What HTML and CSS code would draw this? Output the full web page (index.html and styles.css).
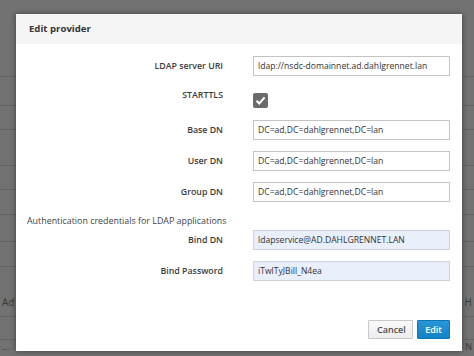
FILE: index.html
```html
<!DOCTYPE html>
<html lang="en">
  <head>
    <meta charset="UTF-8" />
    <meta name="viewport" content="width=device-width, initial-scale=1.0" />
    <title>Edit provider</title>
    <link rel="stylesheet" href="styles.css">
  </head>

  <body>
    <div class="page">
      <div class="row r1"></div>
      <div class="row r2"></div>
      <div class="row r3"></div>
      <div class="row r4"></div>
      <div class="row r5"></div>
      <div class="row r6"></div>
      <div class="row r7"></div>
      <div class="row r8"></div>
      <div class="row r9"><span>Ad</span><span>&#9675; H</span></div>
      <div class="row r10"></div>
      <div class="row r11"><span>...</span><span>&#9675; N</span></div>
    </div>

    <div class="modal">
      <div class="modal-header">Edit provider</div>
      <div class="modal-body">
        <div class="form">
          <label>LDAP server URI</label>
          <input type="text" value="ldap://nsdc-domainnet.ad.dahlgrennet.lan" />

          <label class="check-row">STARTTLS</label>
          <div class="check-row">
            <span class="checkbox">
              <svg width="11" height="11" viewBox="0 0 11 11">
                <path d="M1.5 5.8 L4.3 8.5 L9.6 2.3" fill="none" stroke="#fff" stroke-width="2" />
              </svg>
            </span>
          </div>

          <label>Base DN</label>
          <input type="text" value="DC=ad,DC=dahlgrennet,DC=lan" />

          <label>User DN</label>
          <input type="text" value="DC=ad,DC=dahlgrennet,DC=lan" />

          <label>Group DN</label>
          <input type="text" value="DC=ad,DC=dahlgrennet,DC=lan" />
        </div>

        <p class="section">Authentication credentials for LDAP applications</p>

        <div class="form">
          <label>Bind DN</label>
          <input type="text" class="filled" value="ldapservice@AD.DAHLGRENNET.LAN" />

          <label>Bind Password</label>
          <input type="text" class="filled" value="iTwlTyJBill_N4ea" />
        </div>
      </div>
      <div class="modal-footer">
        <button class="btn">Cancel</button>
        <button class="btn btn-primary">Edit</button>
      </div>
    </div>
  </body>
</html>
```

FILE: styles.css
```css
html,
body {
  margin: 0;
  width: 474px;
  height: 356px;
  overflow: hidden;
  font-family: "Open Sans", "Liberation Sans", sans-serif;
}
.page {
  background-color: #727272;
  height: 356px;
}
.row {
  box-sizing: border-box;
  border-bottom: 1px solid #636363;
  display: flex;
  justify-content: space-between;
  padding: 0 2px;
  font-size: 10px;
  line-height: 12px;
  color: #3a3a3a;
}
.r1 { height: 77px; }
.r2 { height: 29px; }
.r3 { height: 24px; }
.r4 { height: 36px; }
.r5 { height: 24px; }
.r6 { height: 25px; }
.r7 { height: 27px; }
.r8 { height: 25px; }
.r9 { height: 50px; padding-top: 29px; }
.r10 { height: 23px; }
.r11 { height: 16px; border-bottom: 0; padding-top: 1px; font-size: 9px; }

.modal {
  position: absolute;
  left: 16px;
  top: 14px;
  width: 446px;
  height: 337px;
  background: #fff;
  box-shadow: 0 0 6px rgba(0, 0, 0, 0.45);
  display: flex;
  flex-direction: column;
  color: #363636;
}
.modal-header {
  height: 30px;
  line-height: 30px;
  padding-left: 13px;
  background: #f5f5f5;
  font-size: 9.6px;
  font-weight: 700;
  color: #363636;
}
.modal-body {
  padding: 12px 12px 0 11px;
  flex: 1;
}
.form {
  display: grid;
  grid-template-columns: 196px 197px;
  column-gap: 30px;
  row-gap: 11px;
  align-items: center;
}
.form label {
  text-align: right;
  font-size: 8.8px;
  font-weight: 600;
  color: #3d3d3d;
}
.form input {
  box-sizing: border-box;
  height: 20px;
  width: 197px;
  margin: 0;
  padding: 0 4px;
  border: 1px solid #c4c4c4;
  font-family: inherit;
  font-size: 8.6px;
  color: #333;
  background: #fff;
}
.form input.filled {
  background: #e9f0fc;
  border-color: #cfd3d9;
}
.check-row {
  height: 22px;
  display: flex;
  align-items: center;
}
label.check-row {
  justify-content: flex-end;
  align-items: flex-start;
  padding-top: 2px;
  box-sizing: border-box;
}
.checkbox {
  display: flex;
  align-items: center;
  justify-content: center;
  width: 15px;
  height: 15px;
  margin-top: 4px;
  border-radius: 2px;
  background: #6b6b6b;
}
.section {
  margin: 12px 0 3px 0;
  font-size: 8.9px;
  color: #444;
}
.modal-footer {
  display: flex;
  justify-content: flex-end;
  gap: 4px;
  padding: 0 12px 12px 0;
}
.btn {
  box-sizing: border-box;
  height: 19px;
  padding: 0 8px;
  border: 1px solid #c8c8c8;
  border-radius: 1px;
  background: linear-gradient(#fafafa, #ededed);
  font-family: inherit;
  font-size: 9px;
  font-weight: 600;
  color: #4d4d4d;
}
.btn:first-child {
  width: 45px;
}
.btn-primary {
  width: 33px;
  padding: 0;
  border-color: #0a78b8;
  background: linear-gradient(#2a95d6, #1282c6);
  color: #fff;
}
```
